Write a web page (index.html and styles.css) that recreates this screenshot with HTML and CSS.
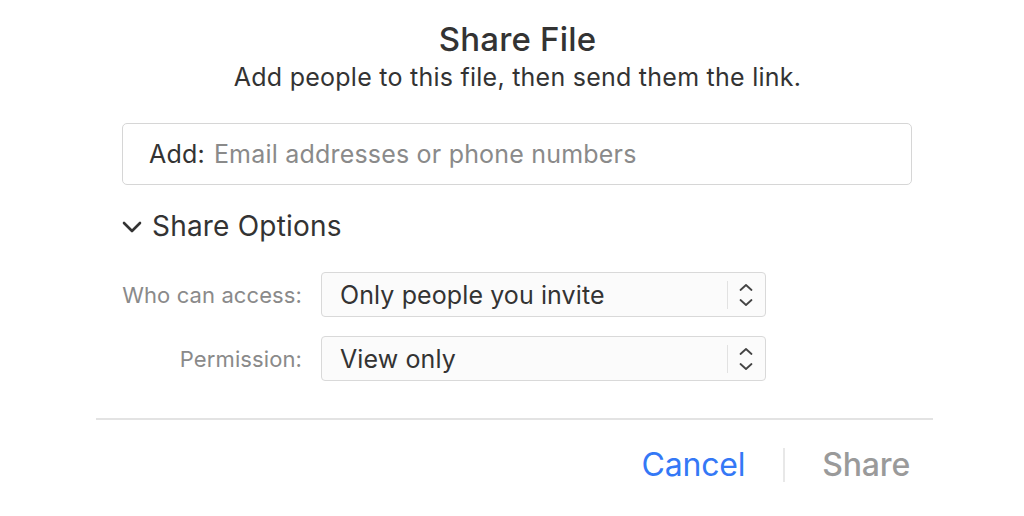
FILE: index.html
```html
<!DOCTYPE html>
<html>
<head>
<meta charset="utf-8">
<link rel="stylesheet" href="styles.css">
</head>
<body>
<div class="dialog">
  <div class="header">
    <h1 class="title">Share File</h1>
    <p class="subtitle">Add people to this file, then send them the link.</p>
  </div>
  <div class="content">
    <div class="add-box">
      <span class="add-label">Add:</span>
      <span class="add-placeholder">Email addresses or phone numbers</span>
    </div>
    <div class="options-toggle">
      <svg class="chev" width="20" height="12" viewBox="0 0 20 12"><path d="M2 2 L10 10 L18 2" fill="none" stroke="#333" stroke-width="2.6" stroke-linecap="round" stroke-linejoin="round"/></svg>
      <span>Share Options</span>
    </div>
    <div class="options">
      <div class="opt-label">Who can access:</div>
      <div class="select">
        <span class="select-text">Only people you invite</span>
        <span class="select-sep"></span>
        <svg class="updown" width="16" height="26" viewBox="0 0 16 26"><path d="M2.5 8 L8 3 L13.5 8 M2.5 18 L8 23 L13.5 18" fill="none" stroke="#444" stroke-width="1.8" stroke-linecap="round" stroke-linejoin="round"/></svg>
      </div>
      <div class="opt-label">Permission:</div>
      <div class="select">
        <span class="select-text">View only</span>
        <span class="select-sep"></span>
        <svg class="updown" width="16" height="26" viewBox="0 0 16 26"><path d="M2.5 8 L8 3 L13.5 8 M2.5 18 L8 23 L13.5 18" fill="none" stroke="#444" stroke-width="1.8" stroke-linecap="round" stroke-linejoin="round"/></svg>
      </div>
    </div>
  </div>
  <div class="footer">
    <button class="btn cancel">Cancel</button>
    <span class="btn-sep"></span>
    <button class="btn share">Share</button>
  </div>
</div>
</body>
</html>
```
FILE: styles.css
```css
*, *::before, *::after {
  box-sizing: border-box;
}
html, body {
  margin: 0;
  padding: 0;
  background: #fff;
}
body {
  font-family: Inter, "Noto Sans", sans-serif;
  color: #333;
  width: 1024px;
  height: 516px;
  overflow: hidden;
}
.dialog {
  padding: 0 91px 0 96px;
}
.header {
  text-align: center;
  padding: 20px 0 0 6px;
}
.title {
  margin: 0;
  font-size: 33px;
  font-weight: 550;
  line-height: 38px;
  color: #333;
  letter-spacing: 0.2px;
}
.subtitle {
  margin: 0;
  font-size: 25px;
  line-height: 38px;
  color: #333;
  letter-spacing: 0.25px;
}
.content {
  padding: 27px 21px 0 26px;
}
.add-box {
  height: 62px;
  border: 1px solid #d6d6d6;
  border-radius: 5px;
  display: flex;
  align-items: center;
  padding-left: 26px;
  font-size: 25px;
  letter-spacing: 0.2px;
}
.add-label {
  color: #333;
  margin-right: 9px;
}
.add-placeholder {
  color: #8a8a8a;
}
.options-toggle {
  display: flex;
  align-items: center;
  margin-top: 23px;
  font-size: 28px;
  color: #333;
  height: 36px;
  letter-spacing: 0.2px;
}
.chev {
  margin-right: 10px;
  margin-top: 1px;
}
.options {
  display: grid;
  grid-template-columns: 180px 445px;
  column-gap: 19px;
  row-gap: 19px;
  margin-top: 28px;
  align-items: center;
}
.opt-label {
  text-align: right;
  font-size: 22px;
  color: #8a8a8a;
  letter-spacing: 0.1px;
  white-space: nowrap;
}
.select {
  height: 45px;
  border: 1px solid #d9d9d9;
  border-radius: 4px;
  background: #fbfbfb;
  display: flex;
  align-items: center;
  padding-left: 18px;
  padding-right: 11px;
}
.select-text {
  flex: 1;
  font-size: 25px;
  color: #333;
  letter-spacing: 0.1px;
}
.select-sep {
  width: 1px;
  height: 28px;
  background: #e2e2e2;
  margin-right: 10px;
}
.footer {
  margin-top: 37px;
  border-top: 2px solid #e3e3e3;
  display: flex;
  justify-content: flex-end;
  align-items: center;
  padding-right: 23px;
  padding-top: 26px;
}
.btn {
  border: none;
  background: none;
  font-family: Inter, "Noto Sans", sans-serif;
  font-size: 32px;
  padding: 0;
  line-height: 38px;
  letter-spacing: -0.2px;
}
.cancel { color: #3478f6; }
.share { color: #9a9a9a; font-weight: 500; }
.btn-sep {
  width: 2px;
  height: 34px;
  background: #e8e8e8;
  margin: 0 37px 0 38px;
}
```
